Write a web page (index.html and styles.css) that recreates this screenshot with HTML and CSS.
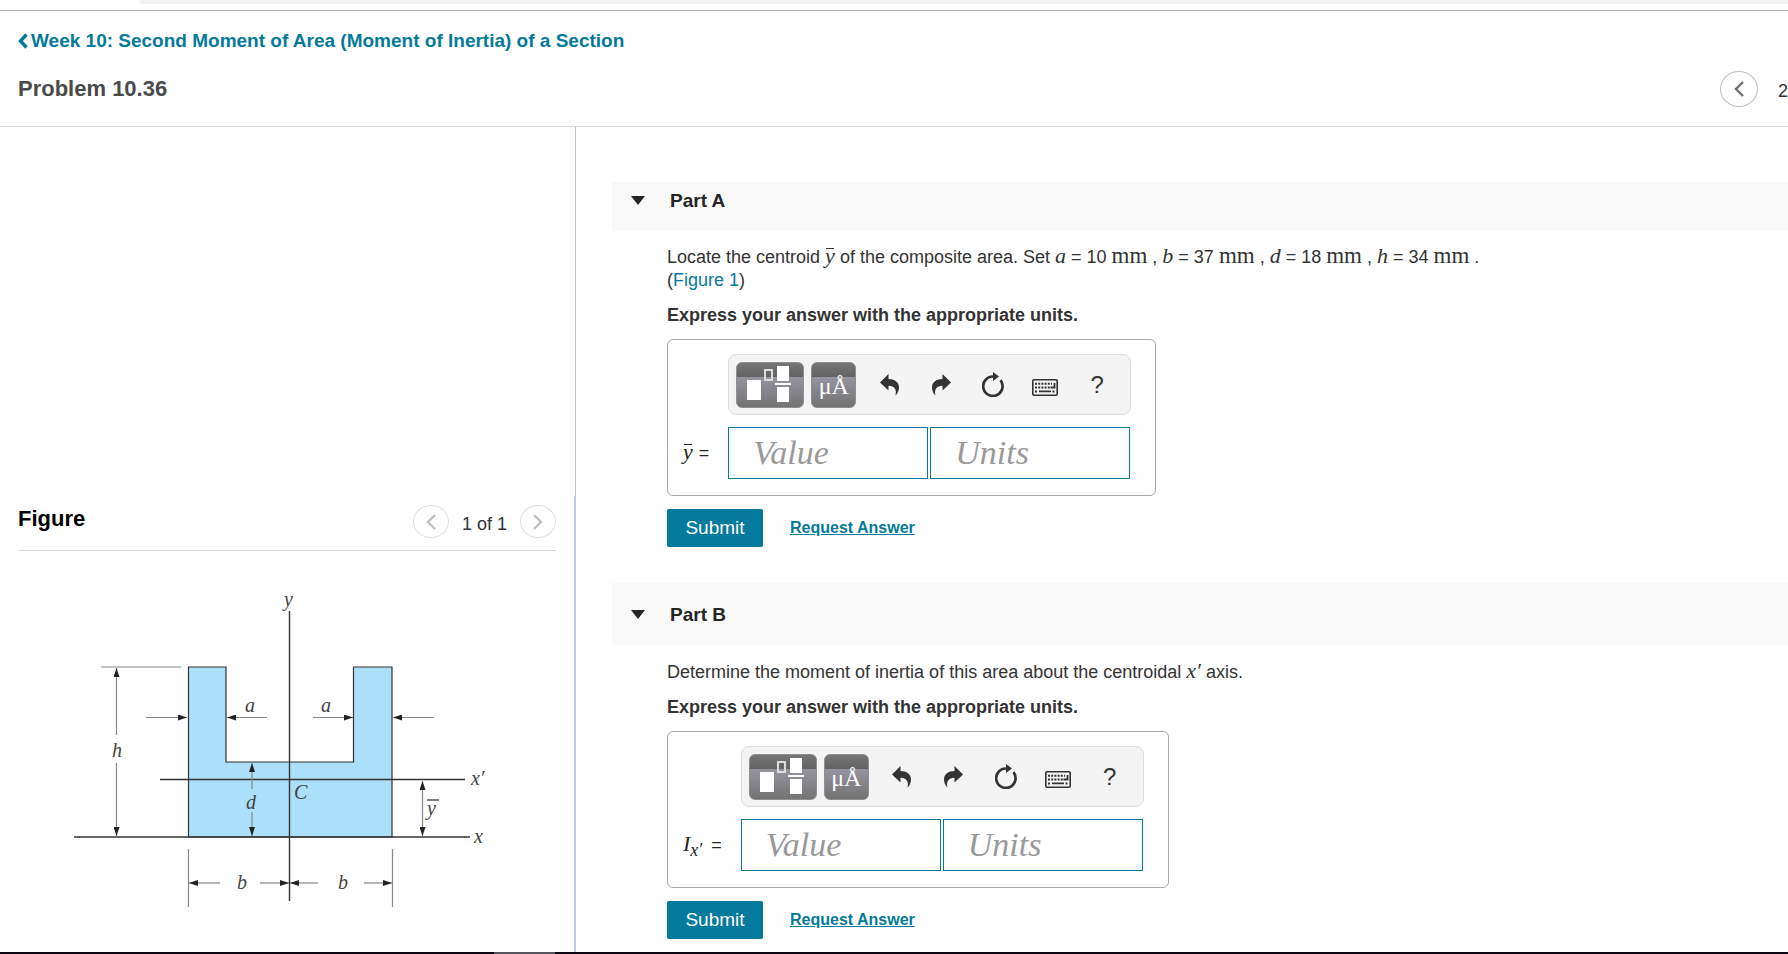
FILE: index.html
```html
<!DOCTYPE html>
<html lang="en">
<head>
  <meta charset="UTF-8">
  <meta name="viewport" content="width=device-width, initial-scale=1.0">
  <title>Problem 10.36</title>
  <link rel="stylesheet" href="styles.css">
</head>
<body>
  <!-- shared icons -->
  <svg class="sprite" aria-hidden="true">
    <symbol id="icon-left" viewBox="0 0 10 16"><path d="M9 1L2 8l7 7" fill="none" stroke="currentColor" stroke-width="2.400"/></symbol>
    <symbol id="icon-right" viewBox="0 0 10 16"><path d="M1 1l7 7-7 7" fill="none" stroke="currentColor" stroke-width="2.400"/></symbol>
    <symbol id="icon-templates" viewBox="0 0 46 38">
      <path d="M0 14h14v20H0zM30 0h12v15H30zM30 21h12v15H30zM28 17h16v2H28z" fill="#fff"/>
      <path d="M18 4h7v10h-7z" fill="none" stroke="#ddd" stroke-width="2"/>
    </symbol>
    <symbol id="icon-undo" viewBox="0 0 19 22"><path d="M0 8.500L8.500 0v5C14.500 5 19 8 19 13.500c0 3.500-1.500 6-3.500 8C17 15.500 14.500 12 8.500 11.800V16.500z" fill="currentColor"/></symbol>
    <symbol id="icon-redo" viewBox="0 0 19 22"><path d="M19 8.500L10.500 0v5C4.500 5 0 8 0 13.500c0 3.500 1.500 6 3.500 8C2 15.500 4.500 12 10.500 11.800V16.500z" fill="currentColor"/></symbol>
    <symbol id="icon-reset" viewBox="0 0 22 25">
      <path d="M18.500 8.200A9.700 9.700 0 1 1 11 4.500" fill="none" stroke="currentColor" stroke-width="2.700"/>
      <path d="M11 0l6 4.500-6 4.500z" fill="currentColor"/>
    </symbol>
    <symbol id="icon-keyboard" viewBox="0 0 26 17">
      <rect x="0.800" y="0.800" width="24.400" height="15.400" rx="1.200" fill="none" stroke="currentColor" stroke-width="1.600"/>
      <path d="M3 4.800h17M3 8.500h15M3 12.400h2.500M20.500 12.400H23" stroke="currentColor" stroke-width="2" stroke-dasharray="2 1.200" fill="none"/>
      <path d="M7 12.400h12M18.500 8.500h4V4" stroke="currentColor" stroke-width="1.800" fill="none"/>
    </symbol>
  </svg>

  <div class="browser-strip"><div class="address-bar"></div></div>

  <header class="header">
    <a class="back-link" href="#"><svg width="10" height="16" viewBox="0 0 10 16" aria-hidden="true"><path d="M8.500 1.500L2.500 8l6 6.500" fill="none" stroke="currentColor" stroke-width="3.400"/></svg>Week 10: Second Moment of Area (Moment of Inertia) of a Section</a>
    <div class="title-row">
      <h1>Problem 10.36</h1>
      <div class="pager">
        <button class="round large" aria-label="Previous problem"><svg width="10" height="16"><use href="#icon-left"/></svg></button>
        <span>2</span>
      </div>
    </div>
  </header>

  <div class="content">
    <aside class="side">
      <div class="side-top"></div>
      <section class="figure-pane">
        <div class="figure-head">
          <h2>Figure</h2>
          <div class="figure-nav">
            <button class="round" aria-label="Previous figure" disabled><svg width="10" height="16"><use href="#icon-left"/></svg></button>
            <span>1 of 1</span>
            <button class="round" aria-label="Next figure" disabled><svg width="10" height="16"><use href="#icon-right"/></svg></button>
          </div>
        </div>
        <svg class="diagram" width="440" height="330" viewBox="60 585 440 330" role="img" aria-label="U-shaped section">
          <defs>
            <marker id="arrow" viewBox="0 0 9 6" refX="9" refY="3" markerWidth="9" markerHeight="6" markerUnits="userSpaceOnUse" orient="auto-start-reverse"><path d="M0 0l9 3-9 3z" fill="#222"/></marker>
          </defs>
          <path d="M188.500 667H226v95h127.500v-95H392v170H188.500z" fill="#abdffa" stroke="#333" stroke-width="1.200"/>
          <g stroke="#333" stroke-width="1.400">
            <path d="M289.500 611v290M160 779.500h305M74 837h396"/>
          </g>
          <g stroke="#888" stroke-width="1.200" fill="none">
            <path d="M101 667h80M188.500 849v58M392.500 849v58"/>
            <path d="M116.500 735v-67" marker-end="url(#arrow)"/>
            <path d="M116.500 763v73" marker-end="url(#arrow)"/>
            <path d="M146 717.500h41" marker-end="url(#arrow)"/>
            <path d="M267 717.500h-40" marker-end="url(#arrow)"/>
            <path d="M313 717.500h40" marker-end="url(#arrow)"/>
            <path d="M434 717.500h-41" marker-end="url(#arrow)"/>
            <path d="M252 789v-26" marker-end="url(#arrow)"/>
            <path d="M252 812v24" marker-end="url(#arrow)"/>
            <path d="M422.500 781v55" marker-start="url(#arrow)" marker-end="url(#arrow)"/>
            <path d="M220 883h-31" marker-end="url(#arrow)"/>
            <path d="M260 883h29" marker-end="url(#arrow)"/>
            <path d="M318 883h-28" marker-end="url(#arrow)"/>
            <path d="M364 883h28" marker-end="url(#arrow)"/>
          </g>
          <path d="M427 800h12" stroke="#555" stroke-width="1.500"/>
          <g class="diagram-text">
            <text x="284" y="606">y</text>
            <text x="112" y="757">h</text>
            <text x="245" y="712">a</text>
            <text x="321" y="712">a</text>
            <text x="246" y="809">d</text>
            <text x="294" y="799">C</text>
            <text x="471" y="785">x′</text>
            <text x="474" y="843">x</text>
            <text x="427" y="815">y</text>
            <text x="237" y="889">b</text>
            <text x="338" y="889">b</text>
          </g>
        </svg>
      </section>
    </aside>

    <main class="main">
      <section class="part">
        <div class="part-head first"><button class="toggle" aria-label="Collapse Part A"></button><h2>Part A</h2></div>
        <div class="part-body">
          <p>Locate the centroid <i class="bar">y</i> of the composite area. Set <i>a</i> = 10 <span class="unit">mm</span> , <i>b</i> = 37 <span class="unit">mm</span> , <i>d</i> = 18 <span class="unit">mm</span> , <i>h</i> = 34 <span class="unit">mm</span> .<br>(<a href="#">Figure 1</a>)</p>
          <p><strong>Express your answer with the appropriate units.</strong></p>
          <div class="answer">
            <label for="value-a"><i class="bar">y</i> =</label>
            <div class="editor">
              <div class="toolbar">
                <button class="tool wide" aria-label="Templates"><svg width="46" height="38"><use href="#icon-templates"/></svg></button>
                <button class="tool" aria-label="Symbols">μÅ</button>
                <div class="actions">
                  <button aria-label="Undo"><svg width="19" height="22"><use href="#icon-undo"/></svg></button>
                  <button aria-label="Redo"><svg width="19" height="22"><use href="#icon-redo"/></svg></button>
                  <button aria-label="Reset"><svg width="22" height="25"><use href="#icon-reset"/></svg></button>
                  <button class="low" aria-label="Keyboard shortcuts"><svg width="26" height="17"><use href="#icon-keyboard"/></svg></button>
                  <button aria-label="Help">?</button>
                </div>
              </div>
              <div class="fields">
                <input id="value-a" type="text" placeholder="Value">
                <input type="text" placeholder="Units" aria-label="Units">
              </div>
            </div>
          </div>
          <div class="submit-row">
            <button class="submit">Submit</button>
            <a href="#">Request Answer</a>
          </div>
        </div>
      </section>

      <section class="part">
        <div class="part-head"><button class="toggle" aria-label="Collapse Part B"></button><h2>Part B</h2></div>
        <div class="part-body">
          <p>Determine the moment of inertia of this area about the centroidal <i>x′</i> axis.</p>
          <p><strong>Express your answer with the appropriate units.</strong></p>
          <div class="answer">
            <label for="value-b"><i>I<sub>x′</sub></i> =</label>
            <div class="editor">
              <div class="toolbar">
                <button class="tool wide" aria-label="Templates"><svg width="46" height="38"><use href="#icon-templates"/></svg></button>
                <button class="tool" aria-label="Symbols">μÅ</button>
                <div class="actions">
                  <button aria-label="Undo"><svg width="19" height="22"><use href="#icon-undo"/></svg></button>
                  <button aria-label="Redo"><svg width="19" height="22"><use href="#icon-redo"/></svg></button>
                  <button aria-label="Reset"><svg width="22" height="25"><use href="#icon-reset"/></svg></button>
                  <button class="low" aria-label="Keyboard shortcuts"><svg width="26" height="17"><use href="#icon-keyboard"/></svg></button>
                  <button aria-label="Help">?</button>
                </div>
              </div>
              <div class="fields">
                <input id="value-b" type="text" placeholder="Value">
                <input type="text" placeholder="Units" aria-label="Units">
              </div>
            </div>
          </div>
          <div class="submit-row">
            <button class="submit">Submit</button>
            <a href="#">Request Answer</a>
          </div>
        </div>
      </section>
    </main>
  </div>
  <div class="taskbar"><div class="taskbar-active"></div></div>
</body>
</html>
```
FILE: styles.css
```css
* {
  box-sizing: border-box;
}
body {
  margin: 0;
  min-height: 100vh;
  display: flex;
  flex-direction: column;
  font-family: "Liberation Sans", Arial, sans-serif;
  font-size: 18px;
  line-height: 23px;
  color: #333;
  background: #fff;
}
h1, h2, p {
  margin: 0;
}
a {
  color: #047a9c;
  text-decoration: none;
}
button {
  font-family: inherit;
  color: inherit;
  padding: 0;
  border: none;
  background: none;
  cursor: pointer;
}
svg {
  display: block;
}
i, .unit {
  font-family: "Liberation Serif", "Times New Roman", serif;
  font-size: 22px;
  line-height: 16px;
}
.sprite {
  display: none;
}

/* bottom edge of the browser toolbar */
.browser-strip {
  height: 11px;
  padding-left: 139px;
  border-bottom: 1px solid #b3b3b3;
}
.address-bar {
  height: 4px;
  background: #f1f3f4;
  border-bottom-left-radius: 8px;
}

.header {
  height: 116px;
  padding: 18px 0 0 18px;
  border-bottom: 1px solid #d9d9d9;
}
.back-link {
  display: flex;
  align-items: center;
  gap: 3px;
  font-size: 19px;
  font-weight: bold;
}
.title-row {
  display: flex;
  justify-content: space-between;
  align-items: center;
  margin-top: 19px;
}
h1 {
  padding-bottom: 2px;
  font-size: 22px;
  color: #4a4a4a;
}
.pager {
  display: flex;
  align-items: center;
  gap: 20px;
}
.pager span, .figure-nav span {
  padding-top: 5px;
}
.round {
  display: flex;
  align-items: center;
  justify-content: center;
  width: 36px;
  height: 33px;
  border: 1px solid #dedede;
  border-radius: 50%;
  color: #c0c0c0;
}
.round.large {
  width: 38px;
  height: 36px;
  border-color: #c0c0c0;
  color: #6a7070;
}

.content {
  flex: 1;
  display: grid;
  grid-template-columns: 576px 1fr;
}
.side {
  display: flex;
  flex-direction: column;
}
.side-top {
  height: 369px;
  border-right: 1px solid #b9c8d3;
}
.figure-pane {
  flex: 1;
  padding: 0 18px;
  border-right: 2px solid #b8cce4;
}
.figure-head {
  display: flex;
  justify-content: space-between;
  align-items: center;
  padding: 9px 0 12px;
  border-bottom: 1px solid #d9d9d9;
}
.figure-head h2 {
  padding-bottom: 7px;
  font-size: 22px;
  color: #000;
}
.figure-nav {
  display: flex;
  align-items: center;
  gap: 13px;
}
.diagram {
  margin: 34px 0 0 42px;
}
.diagram-text {
  font-family: "Liberation Serif", "Times New Roman", serif;
  font-style: italic;
  font-size: 20px;
  fill: #444;
}

.main {
  padding: 55px 0 12px 36px;
}
.part + .part {
  margin-top: 36px;
}
.part-head {
  display: flex;
  align-items: center;
  gap: 25px;
  height: 62px;
  padding-left: 19px;
  background: #f9f9f9;
}
.part-head.first {
  height: 49px;
  padding-bottom: 13px;
}
.part-head h2 {
  font-size: 19px;
  color: #252525;
}
.toggle {
  border: 7px solid transparent;
  border-top: 9px solid #252525;
  border-bottom: none;
}
.part-body {
  padding: 16px 0 0 55px;
}
.first + .part-body {
  padding-top: 15px;
}
.part-body p {
  margin-bottom: 12px;
}
.unit {
  font-size: 23px;
}
.bar {
  background: linear-gradient(currentColor, currentColor) right 1px top 5px / 8px 1px no-repeat;
}
sub {
  margin-right: 3px;
  font-size: 18px;
  line-height: 1px;
}

.answer {
  display: inline-flex;
  align-items: flex-end;
  gap: 19px;
  padding: 14px 24px 16px 15px;
  border: 1px solid #a9a9a9;
  border-radius: 6px;
  color: #252525;
}
.answer label {
  line-height: 52px;
}
.answer label i {
  margin-right: 1px;
}
.toolbar {
  display: flex;
  align-items: center;
  gap: 7px;
  height: 61px;
  padding: 0 7px;
  border: 1px solid #dcdcdc;
  border-radius: 8px;
  background: #f4f4f4;
}
.tool {
  display: flex;
  align-items: center;
  justify-content: center;
  width: 45px;
  height: 46px;
  padding-top: 4px;
  border: 1px solid #8f8f8f;
  border-radius: 6px;
  background: linear-gradient(#757575, #636363 14px, #9794a0 14px, #737373);
  color: #fff;
  font-family: "Liberation Serif", "Times New Roman", serif;
  font-size: 24px;
}
.tool.wide {
  width: 68px;
  padding: 0;
}
.actions {
  display: flex;
}
.actions button {
  display: flex;
  align-items: center;
  justify-content: center;
  width: 52px;
  height: 46px;
  font-size: 24px;
  color: #333;
}
.actions .low {
  padding-top: 5px;
}
.fields {
  display: flex;
  gap: 2px;
  margin-top: 12px;
}
.fields input {
  width: 200px;
  height: 52px;
  padding: 0 24px;
  border: 1px solid #047a9c;
  font-family: "Liberation Serif", "Times New Roman", serif;
  font-size: 34px;
}
.fields input::placeholder {
  color: #999;
  font-style: italic;
}
.submit-row {
  display: flex;
  align-items: center;
  gap: 27px;
  margin-top: 13px;
}
.submit {
  width: 96px;
  height: 38px;
  border-radius: 2px;
  background: #047a9c;
  color: #fff;
  font-size: 19px;
}
.submit-row a {
  padding-bottom: 2px;
  font-size: 16px;
  font-weight: bold;
  text-decoration: underline;
}

/* top edge of the desktop taskbar */
.taskbar {
  height: 2px;
  padding-left: 494px;
  background: #0c0612;
}
.taskbar-active {
  width: 61px;
  height: 2px;
  background: #55535a;
}
```
